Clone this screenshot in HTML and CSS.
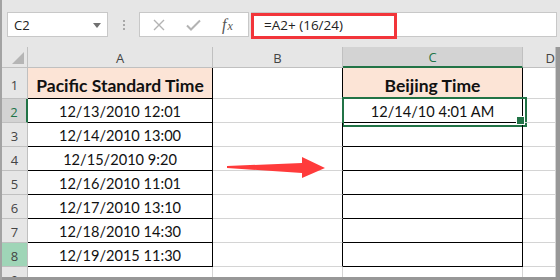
FILE: index.html
```html
<!DOCTYPE html>
<html>
<head>
<meta charset="utf-8">
<link rel="stylesheet" href="styles.css">
</head>
<body>
<div class="window">
  <div class="toolbar">
    <div class="namebox"><span class="nb-text">C2</span><span class="caret"></span></div>
    <div class="sep"><i></i><i></i><i></i></div>
    <div class="btns">
      <svg class="ic-x" width="12" height="12" viewBox="0 0 12 12"><path d="M1 1L11 11M11 1L1 11" stroke="#b3b3b3" stroke-width="1.4" fill="none"/></svg>
      <svg class="ic-ok" width="15" height="12" viewBox="0 0 15 12"><path d="M1 6.5L5 10.5L14 1.5" stroke="#b3b3b3" stroke-width="2" fill="none"/></svg>
      <span class="fx"><i>f</i><i class="fx-x">x</i></span>
    </div>
    <div class="formula"><div class="formula-hl">=A2+ (16/24)</div></div>
  </div>
  <div class="sheet">
    <div class="grid">
      <div class="hd corner"><span class="tri"></span></div>
      <div class="hd col">A</div>
      <div class="hd col">B</div>
      <div class="hd col sel">C</div>
      <div class="hd col d">D</div>

      <div class="hd row">1</div>
      <div class="c a title">Pacific Standard Time</div>
      <div class="c b"></div>
      <div class="c cc title">Beijing Time</div>
      <div class="c"></div>

      <div class="hd row rsel">2</div>
      <div class="c a">12/13/2010 12:01</div>
      <div class="c b"></div>
      <div class="c cc active">12/14/10 4:01 AM</div>
      <div class="c"></div>

      <div class="hd row">3</div>
      <div class="c a">12/14/2010 13:00</div>
      <div class="c b"></div>
      <div class="c cc"></div>
      <div class="c"></div>

      <div class="hd row">4</div>
      <div class="c a">12/15/2010 9:20</div>
      <div class="c b"></div>
      <div class="c cc"></div>
      <div class="c"></div>

      <div class="hd row">5</div>
      <div class="c a">12/16/2010 11:01</div>
      <div class="c b"></div>
      <div class="c cc"></div>
      <div class="c"></div>

      <div class="hd row">6</div>
      <div class="c a">12/17/2010 13:10</div>
      <div class="c b"></div>
      <div class="c cc"></div>
      <div class="c"></div>

      <div class="hd row">7</div>
      <div class="c a">12/18/2010 14:30</div>
      <div class="c b"></div>
      <div class="c cc"></div>
      <div class="c"></div>

      <div class="hd row rgreen">8</div>
      <div class="c a">12/19/2015 11:30</div>
      <div class="c b"></div>
      <div class="c cc"></div>
      <div class="c"></div>

      <div class="hd row">9</div>
      <div class="c"></div>
      <div class="c"></div>
      <div class="c"></div>
      <div class="c"></div>
    </div>
    <svg class="arrow" width="100" height="24" viewBox="226 156 100 24"><polygon points="227,166 302,163 302,157 325,168 302,178 302,173 227,168" fill="#ff3b3b"/></svg>
  </div>
</div>
</body>
</html>
```

FILE: styles.css
```css
* { box-sizing: border-box; }
html, body { margin: 0; padding: 0; }
body { width: 560px; height: 280px; overflow: hidden; background: #e6e6e6; }

.window {
  width: 560px;
  height: 280px;
  border-left: 2px solid #a3a3a3;
  background: #e6e6e6;
  display: flex;
  flex-direction: column;
  position: relative;
}

.toolbar {
  display: flex;
  align-items: flex-start;
  height: 47px;
  flex: none;
  padding-top: 12px;
  padding-left: 5px;
  padding-right: 3px;
}

.namebox {
  width: 101px;
  height: 25px;
  background: #fff;
  border: 1px solid #c8c8c8;
  display: flex;
  align-items: center;
  justify-content: space-between;
  padding: 0 6px 0 6px;
  font-family: "Open Sans", "Noto Sans", sans-serif;
  font-size: 13px;
  color: #222;
}
.caret {
  width: 0; height: 0;
  border-left: 4px solid transparent;
  border-right: 4px solid transparent;
  border-top: 5px solid #707070;
  margin-top: 1px;
}

.sep {
  width: 31px;
  height: 25px;
  display: flex;
  flex-direction: column;
  align-items: center;
  justify-content: center;
  gap: 2px;
}
.sep i { display: block; width: 2px; height: 2px; background: #a8a8a8; }

.btns {
  width: 110px;
  height: 25px;
  background: #fff;
  border: 1px solid #c8c8c8;
  display: flex;
  align-items: center;
  padding-left: 13px;
}
.ic-x { margin-right: 21px; }
.ic-ok { margin-right: 21px; margin-top: 1px; }
.fx {
  font-family: "Liberation Serif", "DejaVu Serif", serif;
  font-size: 16px;
  color: #555;
  font-style: italic;
  line-height: 1;
}
.fx i { font-style: italic; }
.fx-x { font-size: 12px; margin-left: 1px; }

.formula {
  flex: 1;
  height: 25px;
  margin-left: 2px;
  background: #fff;
  border: 1px solid #c8c8c8;
  border-left: none;
  position: relative;
}
.formula-hl {
  position: absolute;
  left: 0; top: 0;
  width: 146px;
  height: 26px;
  border: 3px solid #f2353a;
  font-family: "Open Sans", "Noto Sans", sans-serif;
  font-size: 13.5px;
  color: #222;
  padding-left: 10px;
  line-height: 19px;
}

.sheet {
  position: relative;
  height: 233px;
  width: 558px;
  flex: none;
  border-right: 4px solid #989898;
  border-bottom: 3px solid #989898;
  overflow: hidden;
}

.grid {
  display: grid;
  grid-template-columns: 26px 185px 130px 180px 33px;
  grid-template-rows: 21px 31px repeat(7, 24px) 24px;
  background: #fff;
}

.hd {
  background: #e6e6e6;
  border-right: 1px solid #c0c0c0;
  border-bottom: 1px solid #c0c0c0;
  font-family: "Open Sans", "Noto Sans", sans-serif;
  font-size: 13px;
  color: #444;
  display: flex;
  align-items: center;
  justify-content: center;
}
.corner { position: relative; }
.tri {
  position: absolute;
  right: 3px; bottom: 3px;
  width: 0; height: 0;
  border-left: 12px solid transparent;
  border-bottom: 12px solid #b5b5b5;
}
.col { padding-top: 1px; }
.col.sel {
  background: #d3d3d3;
  color: #217346;
  border-bottom: 2px solid #217346;
}
.col.d { justify-content: flex-end; padding-right: 0; }
.row { font-size: 13px; padding-top: 3px; }
.row.rsel { background: #d3d3d3; color: #217346; border-right: 2px solid #217346; }
.row.rgreen { background: #9fd5b7; }

.c {
  border-right: 1px solid #d4d4d4;
  border-bottom: 1px solid #d4d4d4;
  font-family: "Lato", "Liberation Sans", sans-serif;
  font-size: 14.6px;
  color: #111;
  display: flex;
  align-items: center;
  justify-content: center;
  padding-top: 2px;
  position: relative;
}
.c.a, .c.cc {
  border-right: 1px solid #000;
  border-bottom: 1px solid #000;
}
.c.b { border-right: 1px solid #000; }
.c.title {
  background: #fce4d6;
  font-weight: bold;
  font-size: 17.5px;
  padding-top: 4px;
}
.active::after {
  content: "";
  position: absolute;
  left: -1px;
  top: -2px;
  width: 181px;
  height: 26px;
  border: 2px solid #217346;
}
.active::before {
  content: "";
  position: absolute;
  right: -3px;
  bottom: -3px;
  width: 7px;
  height: 7px;
  background: #217346;
  border: 1px solid #fff;
  z-index: 2;
}

.arrow {
  position: absolute;
  left: 224px;
  top: 109px;
}
```
